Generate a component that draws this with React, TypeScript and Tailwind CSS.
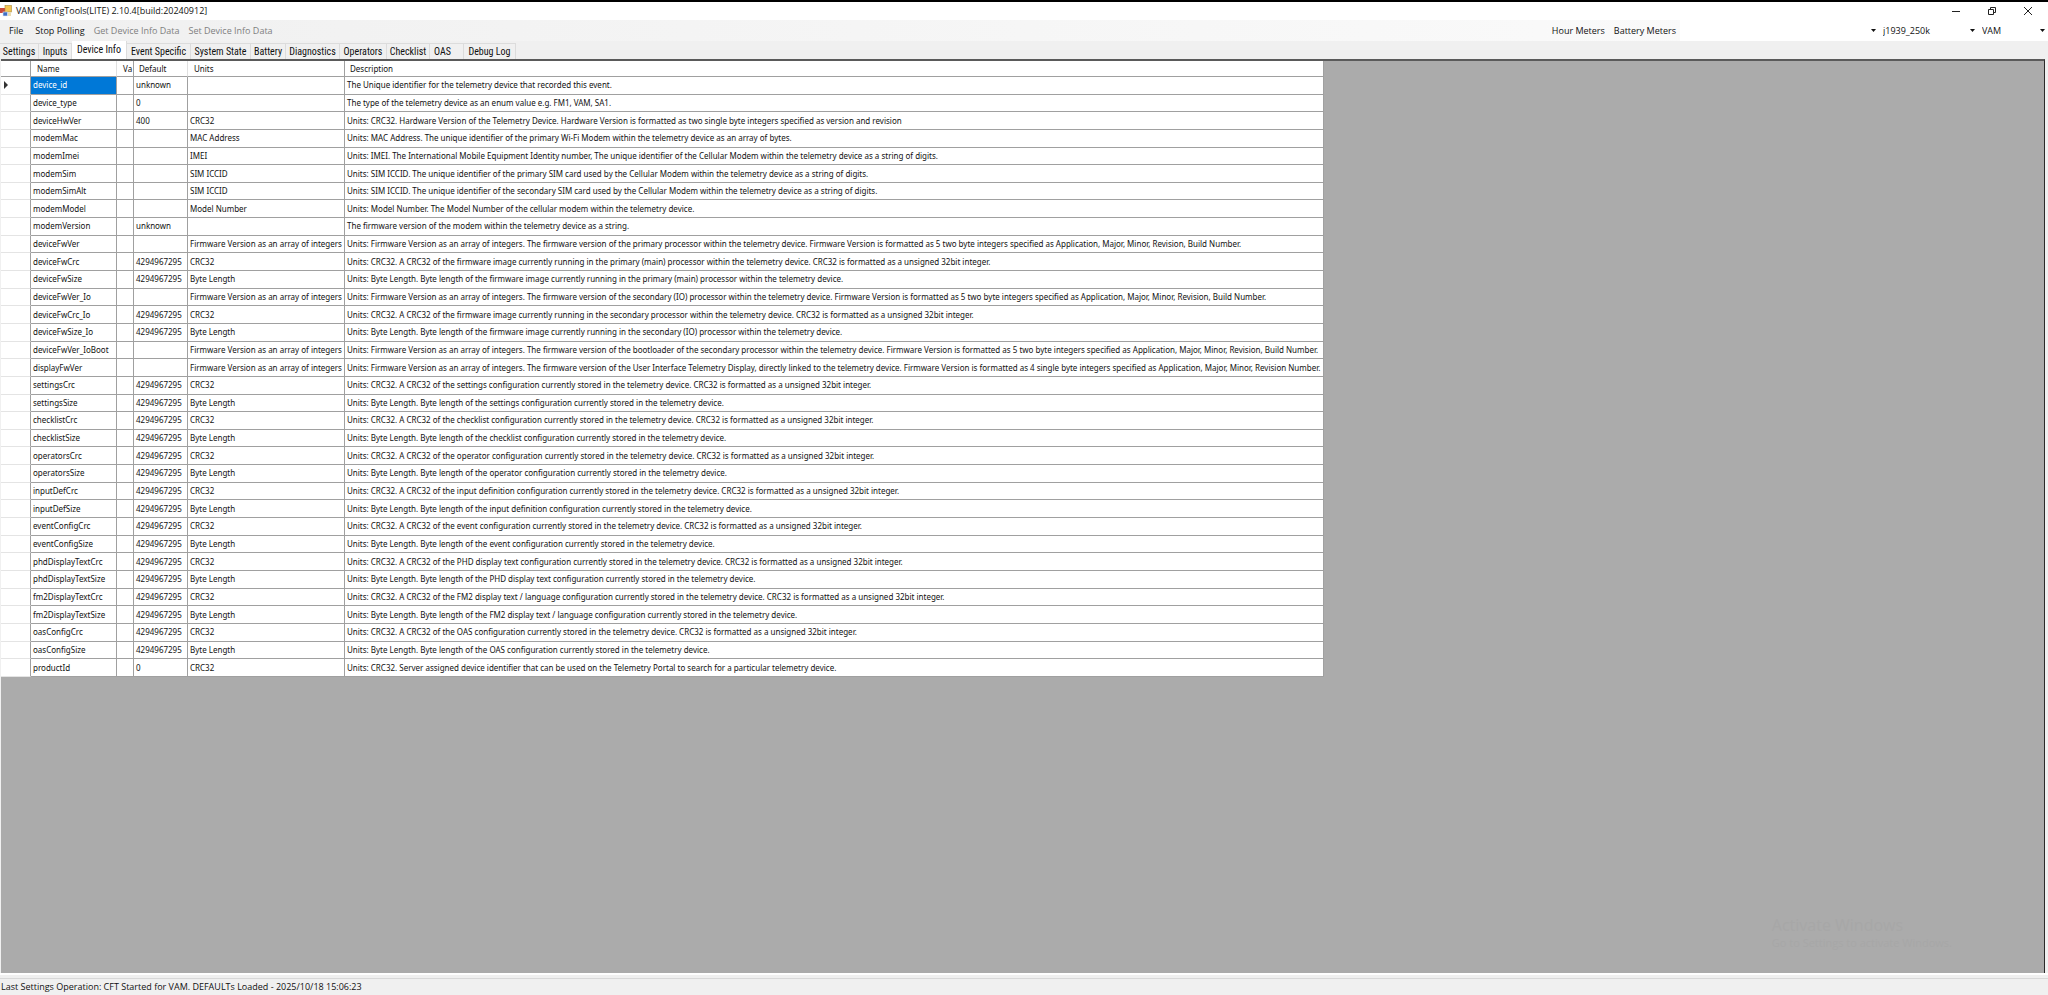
import React, { useState } from 'react';

interface DeviceInfoRow {
    name: string;
    defaultValue: string;
    units: string;
    description: string;
}

const MAX = '4294967295';
const FW = 'Firmware Version as an array of integers';
const APP_FORMAT = 'Firmware Version is formatted as 5 two byte integers specified as Application, Major, Minor, Revision, Build Number.';
const CRC_FORMAT = 'CRC32 is formatted as a unsigned 32bit integer.';

// Each stored configuration reports a CRC row and a size row
const configRows = (prefix: string, label: string): DeviceInfoRow[] => [
    { name: `${prefix}Crc`, defaultValue: MAX, units: 'CRC32', description: `Units: CRC32. A CRC32 of the ${label} configuration currently stored in the telemetry device. ${CRC_FORMAT}` },
    { name: `${prefix}Size`, defaultValue: MAX, units: 'Byte Length', description: `Units: Byte Length. Byte length of the ${label} configuration currently stored in the telemetry device.` },
];

const rows: DeviceInfoRow[] = [
    { name: 'device_id', defaultValue: 'unknown', units: '', description: 'The Unique identifier for the telemetry device that recorded this event.' },
    { name: 'device_type', defaultValue: '0', units: '', description: 'The type of the telemetry device as an enum value e.g. FM1, VAM, SA1.' },
    { name: 'deviceHwVer', defaultValue: '400', units: 'CRC32', description: 'Units: CRC32. Hardware Version of the Telemetry Device. Hardware Version is formatted as two single byte integers specified as version and revision' },
    { name: 'modemMac', defaultValue: '', units: 'MAC Address', description: 'Units: MAC Address. The unique identifier of the primary Wi-Fi Modem within the telemetry device as an array of bytes.' },
    { name: 'modemImei', defaultValue: '', units: 'IMEI', description: 'Units: IMEI. The International Mobile Equipment Identity number, The unique identifier of the Cellular Modem within the telemetry device as a string of digits.' },
    { name: 'modemSim', defaultValue: '', units: 'SIM ICCID', description: 'Units: SIM ICCID. The unique identifier of the primary SIM card used by the Cellular Modem within the telemetry device as a string of digits.' },
    { name: 'modemSimAlt', defaultValue: '', units: 'SIM ICCID', description: 'Units: SIM ICCID. The unique identifier of the secondary SIM card used by the Cellular Modem within the telemetry device as a string of digits.' },
    { name: 'modemModel', defaultValue: '', units: 'Model Number', description: 'Units: Model Number. The Model Number of the cellular modem within the telemetry device.' },
    { name: 'modemVersion', defaultValue: 'unknown', units: '', description: 'The firmware version of the modem within the telemetry device as a string.' },
    { name: 'deviceFwVer', defaultValue: '', units: FW, description: `Units: ${FW}. The firmware version of the primary processor within the telemetry device. ${APP_FORMAT}` },
    { name: 'deviceFwCrc', defaultValue: MAX, units: 'CRC32', description: `Units: CRC32. A CRC32 of the firmware image currently running in the primary (main) processor within the telemetry device. ${CRC_FORMAT}` },
    { name: 'deviceFwSize', defaultValue: MAX, units: 'Byte Length', description: 'Units: Byte Length. Byte length of the firmware image currently running in the primary (main) processor within the telemetry device.' },
    { name: 'deviceFwVer_Io', defaultValue: '', units: FW, description: `Units: ${FW}. The firmware version of the secondary (IO) processor within the telemetry device. ${APP_FORMAT}` },
    { name: 'deviceFwCrc_Io', defaultValue: MAX, units: 'CRC32', description: `Units: CRC32. A CRC32 of the firmware image currently running in the secondary processor within the telemetry device. ${CRC_FORMAT}` },
    { name: 'deviceFwSize_Io', defaultValue: MAX, units: 'Byte Length', description: 'Units: Byte Length. Byte length of the firmware image currently running in the secondary (IO) processor within the telemetry device.' },
    { name: 'deviceFwVer_IoBoot', defaultValue: '', units: FW, description: `Units: ${FW}. The firmware version of the bootloader of the secondary processor within the telemetry device. ${APP_FORMAT}` },
    { name: 'displayFwVer', defaultValue: '', units: FW, description: `Units: ${FW}. The firmware version of the User Interface Telemetry Display, directly linked to the telemetry device. Firmware Version is formatted as 4 single byte integers specified as Application, Major, Minor, Revision Number.` },
    ...configRows('settings', 'settings'),
    ...configRows('checklist', 'checklist'),
    ...configRows('operators', 'operator'),
    ...configRows('inputDef', 'input definition'),
    ...configRows('eventConfig', 'event'),
    ...configRows('phdDisplayText', 'PHD display text'),
    ...configRows('fm2DisplayText', 'FM2 display text / language'),
    ...configRows('oasConfig', 'OAS'),
    { name: 'productId', defaultValue: '0', units: 'CRC32', description: 'Units: CRC32. Server assigned device identifier that can be used on the Telemetry Portal to search for a particular telemetry device.' },
];

const tabs = [
    { label: 'Settings', width: 'w-[39px]' },
    { label: 'Inputs', width: 'w-[33px]' },
    { label: 'Device Info', width: 'w-[55px]' },
    { label: 'Event Specific', width: 'w-[64px]' },
    { label: 'System State', width: 'w-[60px]' },
    { label: 'Battery', width: 'w-[35px]' },
    { label: 'Diagnostics', width: 'w-[54px]' },
    { label: 'Operators', width: 'w-[47px]' },
    { label: 'Checklist', width: 'w-[43px]' },
    { label: 'OAS', width: 'w-[34px] pr-2' },
    { label: 'Debug Log', width: 'w-[52px]' },
];

const AppIcon: React.FC = () => (
    <svg viewBox="0 0 12 12" className="h-3 w-3" aria-hidden="true">
        <rect x="0" y="3" width="5" height="5" fill="#c9483b" />
        <rect x="5" y="0.5" width="6.5" height="6.5" fill="#f3c552" stroke="#a88a3c" strokeWidth="0.6" />
        <rect x="3" y="7" width="4.5" height="4" fill="#3f6fc4" stroke="#dfe7f7" strokeWidth="0.6" />
        <rect x="8" y="8" width="3" height="3" fill="#e9dcb4" />
    </svg>
);

const ToolCombo: React.FC<{ label: string; width: string; options: string[] }> = ({ label, width, options }) => (
    <div className={`flex h-full items-center bg-white ${width}`}>
        <select aria-label={label} className="min-w-0 flex-1 appearance-none bg-white pl-1 outline-none">
            {options.map(o => <option key={o}>{o}</option>)}
        </select>
        <svg viewBox="0 0 5 3" className="mr-[3px] h-[3px] w-[5px]" aria-hidden="true"><path d="M0 0h5L2.5 3z" fill="#111" /></svg>
    </div>
);

const cell = 'overflow-hidden border-r border-b border-[#a0a0a0] p-0 pl-[2px]';
const headCell = 'overflow-hidden border-r border-b border-[#a0a0a0] p-0 text-left font-normal';

export default function App() {
    const [activeTab, setActiveTab] = useState('Device Info');
    const [selected, setSelected] = useState('device_id');

    return (
        <div className="flex h-screen flex-col overflow-hidden bg-[#f0f0f0] font-['Open_Sans','Noto_Sans',sans-serif] text-[9px] leading-4 text-[#111]">
            <header className="flex h-5 shrink-0 items-center border-t-2 border-black bg-white">
                <AppIcon />
                <h1 className="flex-1 pl-1">VAM ConfigTools(LITE) 2.10.4[build:20240912]</h1>
                <button type="button" aria-label="Minimize" className="flex h-full w-9 items-center justify-center">
                    <svg viewBox="0 0 8 8" className="h-2 w-2"><path d="M0 4.5h8" stroke="#222" /></svg>
                </button>
                <button type="button" aria-label="Restore" className="flex h-full w-9 items-center justify-center">
                    <svg viewBox="0 0 8 8" className="h-2 w-2" fill="none" stroke="#222"><path d="M0.5 2.5h5v5h-5zM2.5 2.5v-2h5v5h-2" /></svg>
                </button>
                <button type="button" aria-label="Close" className="mr-[2px] flex h-full w-9 items-center justify-center">
                    <svg viewBox="0 0 8 8" className="h-2 w-2"><path d="M0 0l8 8M8 0L0 8" stroke="#222" /></svg>
                </button>
            </header>

            <nav className="flex h-[21px] shrink-0 items-center bg-linear-to-r from-[#f0f0f0] to-[#fcfcfc]">
                <button type="button" className="ml-[9px]">File</button>
                <button type="button" className="ml-3">Stop Polling</button>
                <button type="button" disabled className="ml-[9px] text-[#808080]">Get Device Info Data</button>
                <button type="button" disabled className="ml-[9px] text-[#808080]">Set Device Info Data</button>
                <div className="flex-1" />
                <button type="button" className="mr-[9px]">Hour Meters</button>
                <button type="button" className="mr-1">Battery Meters</button>
                <ToolCombo label="Port" width="w-[199px]" options={['']} />
                <ToolCombo label="Baud rate" width="w-[99px]" options={['j1939_250k']} />
                <ToolCombo label="Device" width="w-[70px]" options={['VAM']} />
            </nav>

            <div role="tablist" className="flex h-[18px] shrink-0 items-end font-['Roboto_Condensed',Roboto,sans-serif] text-[10px]">
                {tabs.map(tab => (
                    <button
                        key={tab.label}
                        type="button"
                        role="tab"
                        aria-selected={tab.label === activeTab}
                        onClick={() => setActiveTab(tab.label)}
                        className={`flex shrink-0 items-center justify-center border-r border-[#dcdcdc] whitespace-nowrap ${tab.width} ${tab.label === activeTab ? 'h-[18px] bg-white' : 'h-4 border-t'}`}
                    >
                        {tab.label}
                    </button>
                ))}
            </div>

            <main className="relative mr-[3px] ml-px min-h-0 flex-1 overflow-hidden border-t-2 border-r border-t-[#5a5a5a] border-r-[#2a2a2a] bg-[#ababab] font-['Noto_Sans','Open_Sans',sans-serif] text-[8px]">
                <table className="h-[616px] w-[1323px] table-fixed border-separate border-spacing-0 bg-white whitespace-nowrap">
                    <colgroup>
                        <col className="w-[30px]" />
                        <col className="w-[86px]" />
                        <col className="w-[17px]" />
                        <col className="w-[54px]" />
                        <col className="w-[157px]" />
                        <col />
                    </colgroup>
                    <thead>
                        <tr className="h-4 leading-[15px]">
                            <th className={headCell} />
                            <th className={`${headCell} border-r-[#e0e0e0] pl-[6px]`}>Name</th>
                            <th className={`${headCell} pl-[6px]`}>Va</th>
                            <th className={`${headCell} border-r-[#e0e0e0] pl-[5px]`}>Default</th>
                            <th className={`${headCell} pl-[6px]`}>Units</th>
                            <th className={`${headCell} pl-[5px]`}>Description</th>
                        </tr>
                    </thead>
                    <tbody className="leading-[14px]">
                        {rows.map(row => (
                            <tr key={row.name} onClick={() => setSelected(row.name)}>
                                <td className="border-r border-b border-r-[#a0a0a0] border-b-[#e4e4e4] p-0 pl-[3px]">
                                    {row.name === selected && (
                                        <svg viewBox="0 0 4 8" className="h-2 w-1" aria-hidden="true"><path d="M0 0l4 4-4 4z" fill="#333" /></svg>
                                    )}
                                </td>
                                <td className={`${cell} ${row.name === selected ? 'bg-[#0078d7] text-white' : ''}`}>{row.name}</td>
                                <td className={cell} />
                                <td className={cell}>{row.defaultValue}</td>
                                <td className={cell}>{row.units}</td>
                                <td className={cell}>{row.description}</td>
                            </tr>
                        ))}
                    </tbody>
                </table>
                <div className="pointer-events-none absolute right-[92px] bottom-[22px] font-['Open_Sans','Noto_Sans',sans-serif] text-[#a7a7a7]">
                    <p className="text-base leading-5">Activate Windows</p>
                    <p className="text-[11px] leading-4">Go to Settings to activate Windows.</p>
                </div>
            </main>

            <footer className="shrink-0 border-t-2 border-white">
                <p className="mt-[3px] border-t border-[#d8d8d8] pl-px">Last Settings Operation: CFT Started for VAM. DEFAULTs Loaded - 2025/10/18 15:06:23</p>
            </footer>
        </div>
    );
}
